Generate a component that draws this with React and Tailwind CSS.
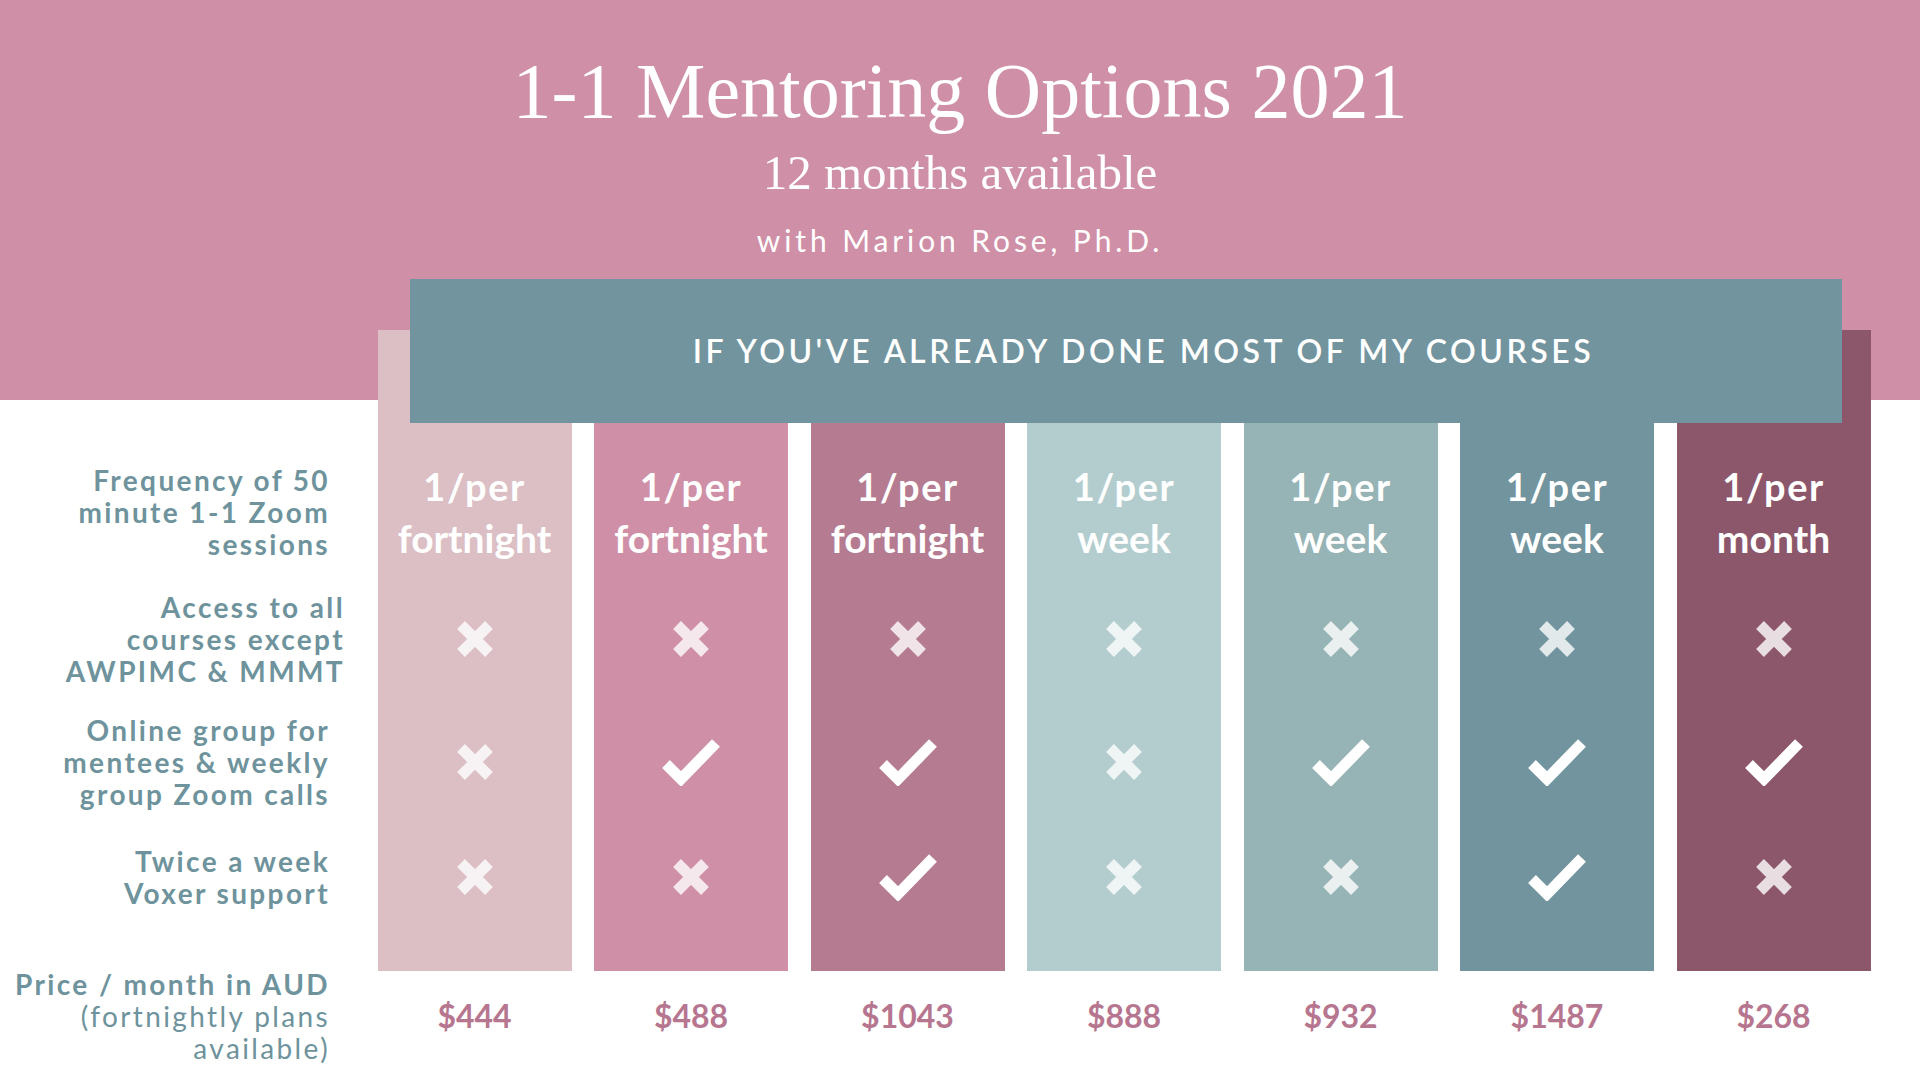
import React from "react";

const X = "x";
const V = "v";

const plans = [
  { col: "col-start-2", bg: "bg-[#dbbfc5]", unit: "fortnight", marks: [X, X, X], price: "$444" },
  { col: "col-start-3", bg: "bg-[#cf90a7]", unit: "fortnight", marks: [X, V, X], price: "$488" },
  { col: "col-start-4", bg: "bg-[#b57b91]", unit: "fortnight", marks: [X, V, V], price: "$1043" },
  { col: "col-start-5", bg: "bg-[#b3cdcf]", unit: "week", marks: [X, X, X], price: "$888" },
  { col: "col-start-6", bg: "bg-[#96b3b5]", unit: "week", marks: [X, V, X], price: "$932" },
  { col: "col-start-7", bg: "bg-[#72949e]", unit: "week", marks: [X, V, V], price: "$1487" },
  { col: "col-start-8", bg: "bg-[#8c566b]", unit: "month", marks: [X, V, X], price: "$268" },
];

function Cross() {
  return (
    <svg width="40" height="40" viewBox="0 0 40 40" className="opacity-80">
      <path d="M6 6 L34 34 M34 6 L6 34" stroke="#fff" strokeWidth="11" fill="none" />
    </svg>
  );
}

function Check() {
  return (
    <svg width="60" height="48" viewBox="0 0 60 48">
      <polyline points="5,26 20,41 55,5" stroke="#fff" strokeWidth="11" fill="none" strokeLinejoin="miter" />
    </svg>
  );
}

const label = "col-start-1 self-center text-right text-[28px] leading-[32px] tracking-[0.085em]";

export default function App() {
  return (
    <div className="w-[1920px] h-[1080px] overflow-hidden bg-[linear-gradient(#cf90a7_400px,#ffffff_400px)] font-['Lato',sans-serif]">
      {/* Title block */}
      <div className="h-[330px] pt-[52px] flex flex-col items-center text-white">
        <h1 className="font-['Liberation_Serif',serif] text-[78px] leading-none font-normal">
          1-1 Mentoring Options 2021
        </h1>
        <p className="mt-[18px] font-['Liberation_Serif',serif] text-[49px] leading-none">
          12 months available
        </p>
        <p className="mt-[28px] text-[30px] leading-none font-normal tracking-[0.13em]">
          with Marion Rose, Ph.D.
        </p>
      </div>

      {/* Comparison table */}
      <div className="grid grid-cols-[355px_repeat(7,194px)] gap-x-[22.5px] grid-rows-[93px_178px_76px_170px_60px_64px_90px] text-[#6e939c]">
        <div className={`${label} row-start-2 pr-[25px] font-bold`}>
          Frequency of 50<br />minute 1-1 Zoom<br />sessions
        </div>
        <div className={`${label} row-start-3 pr-[10px] font-bold`}>
          Access to all<br />courses except<br />AWPIMC &amp; MMMT
        </div>
        <div className={`${label} row-start-4 pr-[25px] font-bold`}>
          Online group for<br />mentees &amp; weekly<br />group Zoom calls
        </div>
        <div className={`${label} row-start-5 pr-[25px] font-bold`}>
          Twice a week<br />Voxer support
        </div>
        <div className={`${label} row-start-7 pr-[25px]`}>
          <span className="font-bold">Price / month in AUD</span>
          <br />
          (fortnightly plans
          <br />
          available)
        </div>

        {plans.map((p) => (
          <div key={p.price} className={`${p.col} row-start-1 row-span-6 grid grid-rows-subgrid ${p.bg}`}>
            <div />
            <div className="flex flex-col items-center justify-center text-white font-bold leading-[52px]">
              <span className="text-[38px] tracking-[0.04em]">1/per</span>
              <span className="text-[39px]">{p.unit}</span>
            </div>
            {p.marks.map((m, i) => (
              <div key={i} className="flex items-center justify-center">
                {m === X ? <Cross /> : <Check />}
              </div>
            ))}
            <div />
          </div>
        ))}

        {plans.map((p) => (
          <div key={p.price + "-price"} className={`${p.col} row-start-7 flex items-center justify-center text-[32px] font-bold text-[#b7768f]`}>
            {p.price}
          </div>
        ))}

        {/* Banner over the column tops */}
        <div className="col-start-2 col-span-7 row-start-1 self-start relative z-10 mt-[-51px] ml-[32px] mr-[29px] h-[144px] bg-[#72949e] flex items-center justify-center pl-[36px]">
          <span className="text-white text-[32px] font-semibold tracking-[0.11em] leading-none">
            IF YOU'VE ALREADY DONE MOST OF MY COURSES
          </span>
        </div>
      </div>
    </div>
  );
}
